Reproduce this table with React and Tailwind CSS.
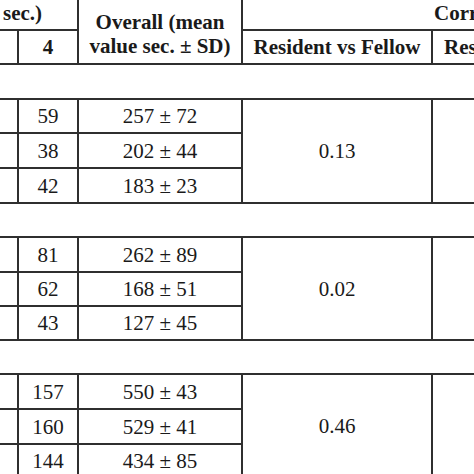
import React from "react";

// Partial view of a results table: timing per task and correlation p-values
const blocks = [
  {
    rows: [
      { n: "59", overall: "257 ± 72" },
      { n: "38", overall: "202 ± 44" },
      { n: "42", overall: "183 ± 23" },
    ],
    p: "0.13",
  },
  {
    rows: [
      { n: "81", overall: "262 ± 89" },
      { n: "62", overall: "168 ± 51" },
      { n: "43", overall: "127 ± 45" },
    ],
    p: "0.02",
  },
  {
    rows: [
      { n: "157", overall: "550 ± 43" },
      { n: "160", overall: "529 ± 41" },
      { n: "144", overall: "434 ± 85" },
    ],
    p: "0.46",
  },
];

const line = "border-[#2f2f2f]";

export default function App() {
  return (
    <div className="w-[474px] h-[474px] overflow-hidden bg-white text-[#1a1a1a] text-[21px] leading-[24px] font-['Liberation_Serif','DejaVu_Serif',serif]">
      <div className="grid w-[650px] grid-cols-[19px_60px_164px_190px_217px] grid-rows-[31px_34px_35px_34px_35px_35px_34px_35px_34px_34px_34px_35px_35px_34px]">
        {/* Header row 1 */}
        <div className={`col-span-2 flex items-center pl-[3px] pb-[3px] font-bold border-r-2 border-b-2 ${line}`}>
          sec.)
        </div>
        <div className={`row-span-2 flex flex-col items-center justify-center pt-[5px] font-bold text-center border-r-2 border-b-2 ${line}`}>
          <span>Overall (mean</span>
          <span>value sec. ± SD)</span>
        </div>
        <div className={`col-span-2 flex items-center pl-[191px] pb-[3px] font-bold whitespace-nowrap border-b-2 ${line}`}>
          Correlation
        </div>

        {/* Header row 2 */}
        <div className={`border-r-2 border-b-2 ${line}`} />
        <div className={`flex items-center justify-center font-bold border-r-2 border-b-2 ${line}`}>4</div>
        <div className={`flex items-center justify-center font-bold whitespace-nowrap border-r-2 border-b-2 ${line}`}>
          Resident vs Fellow
        </div>
        <div className={`flex items-center pl-[11px] font-bold whitespace-nowrap overflow-hidden border-b-2 ${line}`}>
          Resident vs Attending
        </div>

        {blocks.map((block, bi) => (
          <React.Fragment key={bi}>
            {/* section label row (label sits in the cropped-off column) */}
            <div className={`col-span-5 border-b-2 ${line}`} />
            {block.rows.map((row, ri) => (
              <React.Fragment key={ri}>
                <div className={`border-r-2 border-b-2 ${line}`} />
                <div className={`flex items-center justify-center border-r-2 border-b-2 ${line}`}>{row.n}</div>
                <div className={`flex items-center justify-center border-r-2 border-b-2 ${line}`}>{row.overall}</div>
                {ri === 0 && (
                  <>
                    <div className={`row-span-3 flex items-center justify-center border-r-2 border-b-2 ${line}`}>
                      {block.p}
                    </div>
                    <div className={`row-span-3 border-b-2 ${line}`} />
                  </>
                )}
              </React.Fragment>
            ))}
          </React.Fragment>
        ))}
      </div>
    </div>
  );
}
